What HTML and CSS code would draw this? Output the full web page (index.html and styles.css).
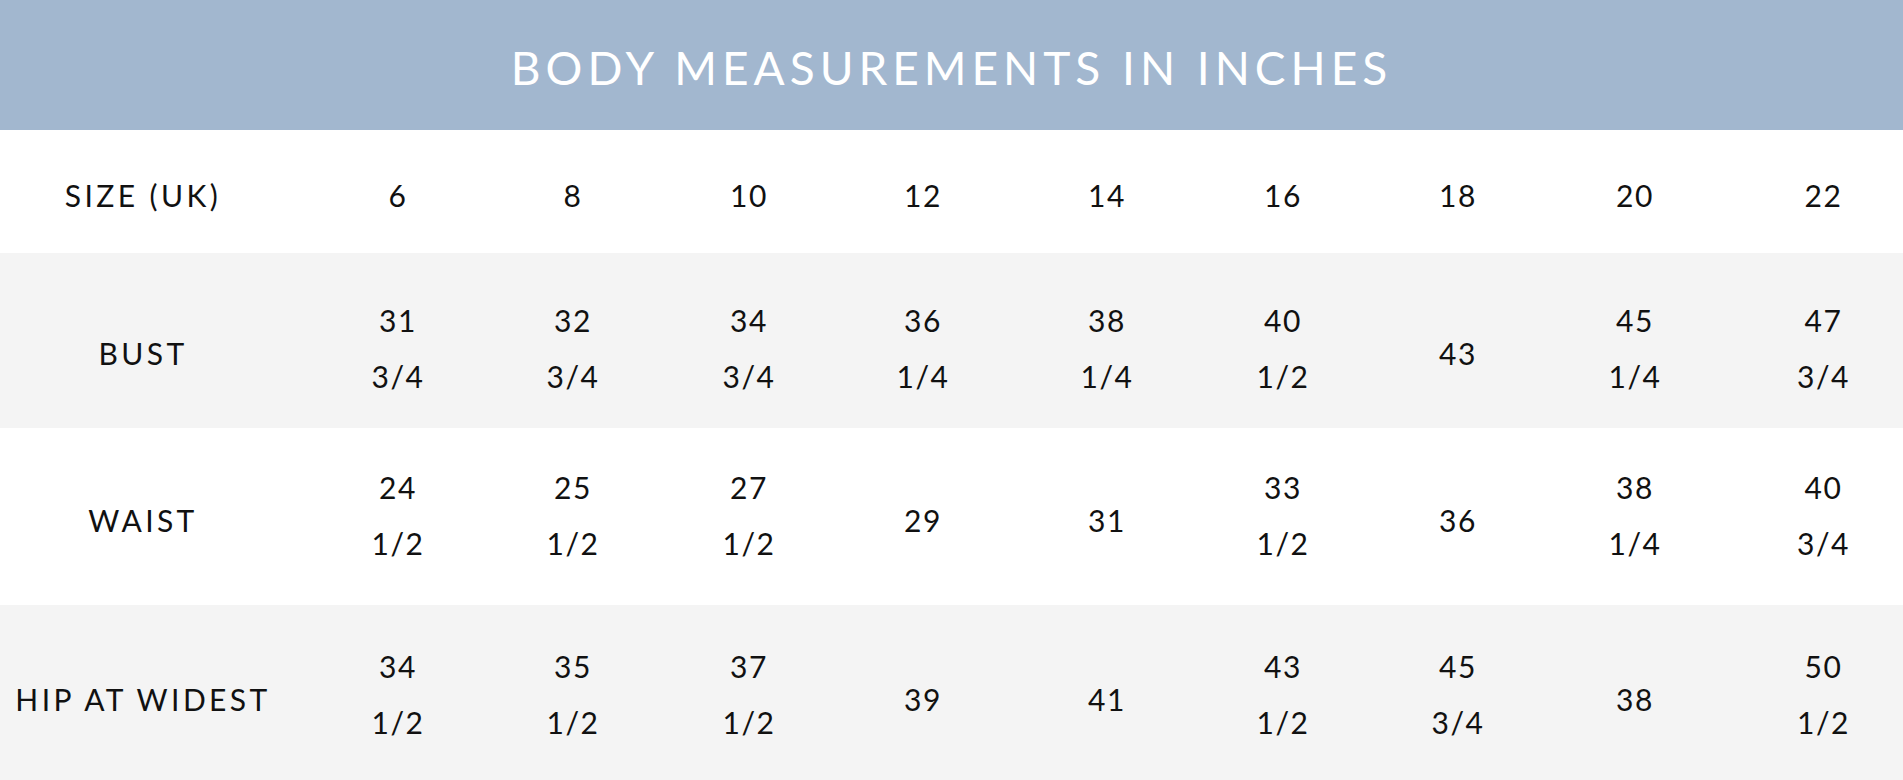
FILE: index.html
```html
<!DOCTYPE html>
<html lang="en">
<head>
<meta charset="utf-8">
<title>Body Measurements in Inches</title>
<link rel="stylesheet" href="styles.css">
</head>
<body>
<div class="chart">
  <div class="title">BODY MEASUREMENTS IN INCHES</div>
  <div class="row row-size">
    <div class="label">SIZE (UK)</div>
    <div class="cell">6</div>
    <div class="cell">8</div>
    <div class="cell">10</div>
    <div class="cell">12</div>
    <div class="cell">14</div>
    <div class="cell">16</div>
    <div class="cell">18</div>
    <div class="cell">20</div>
    <div class="cell last">22</div>
  </div>
  <div class="row row-bust alt">
    <div class="label">BUST</div>
    <div class="cell two">31<br>3/4</div>
    <div class="cell two">32<br>3/4</div>
    <div class="cell two">34<br>3/4</div>
    <div class="cell two">36<br>1/4</div>
    <div class="cell two">38<br>1/4</div>
    <div class="cell two">40<br>1/2</div>
    <div class="cell">43</div>
    <div class="cell two">45<br>1/4</div>
    <div class="cell two last">47<br>3/4</div>
  </div>
  <div class="row row-waist">
    <div class="label">WAIST</div>
    <div class="cell two">24<br>1/2</div>
    <div class="cell two">25<br>1/2</div>
    <div class="cell two">27<br>1/2</div>
    <div class="cell">29</div>
    <div class="cell">31</div>
    <div class="cell two">33<br>1/2</div>
    <div class="cell">36</div>
    <div class="cell two">38<br>1/4</div>
    <div class="cell two last">40<br>3/4</div>
  </div>
  <div class="row row-hip alt">
    <div class="label">HIP AT WIDEST</div>
    <div class="cell two">34<br>1/2</div>
    <div class="cell two">35<br>1/2</div>
    <div class="cell two">37<br>1/2</div>
    <div class="cell">39</div>
    <div class="cell">41</div>
    <div class="cell two">43<br>1/2</div>
    <div class="cell two">45<br>3/4</div>
    <div class="cell">38</div>
    <div class="cell two last">50<br>1/2</div>
  </div>
</div>
</body>
</html>
```

FILE: styles.css
```css
html, body {
  margin: 0;
  padding: 0;
  background: #ffffff;
}

.chart {
  width: 1903px;
  font-family: Lato, "Open Sans", sans-serif;
  color: #111111;
}

.title {
  height: 130px;
  background: #a2b7cf;
  color: #ffffff;
  display: flex;
  align-items: center;
  justify-content: center;
  font-size: 46px;
  font-weight: 400;
  letter-spacing: 5px;
  padding-top: 4px;
  box-sizing: border-box;
}

.row {
  display: grid;
  grid-template-columns: 286px 224px 126px 226px 122px 246px 106px 244px 110px 213px;
  align-items: center;
  font-size: 30px;
  line-height: 56px;
  letter-spacing: 1.5px;
  text-align: center;
  box-sizing: border-box;
}

.label {
  letter-spacing: 3.4px;
  white-space: nowrap;
}

.cell.two {
  margin-bottom: 11px;
}

.cell.last {
  padding-left: 54px;
}

.row-size {
  height: 123px;
  padding-top: 6px;
}

.row-bust {
  height: 175px;
  padding-top: 25px;
}

.row-waist {
  height: 177px;
  padding-top: 7px;
}

.row-hip {
  height: 175px;
  padding-top: 13px;
}

.alt {
  background: #f4f4f4;
}
```
